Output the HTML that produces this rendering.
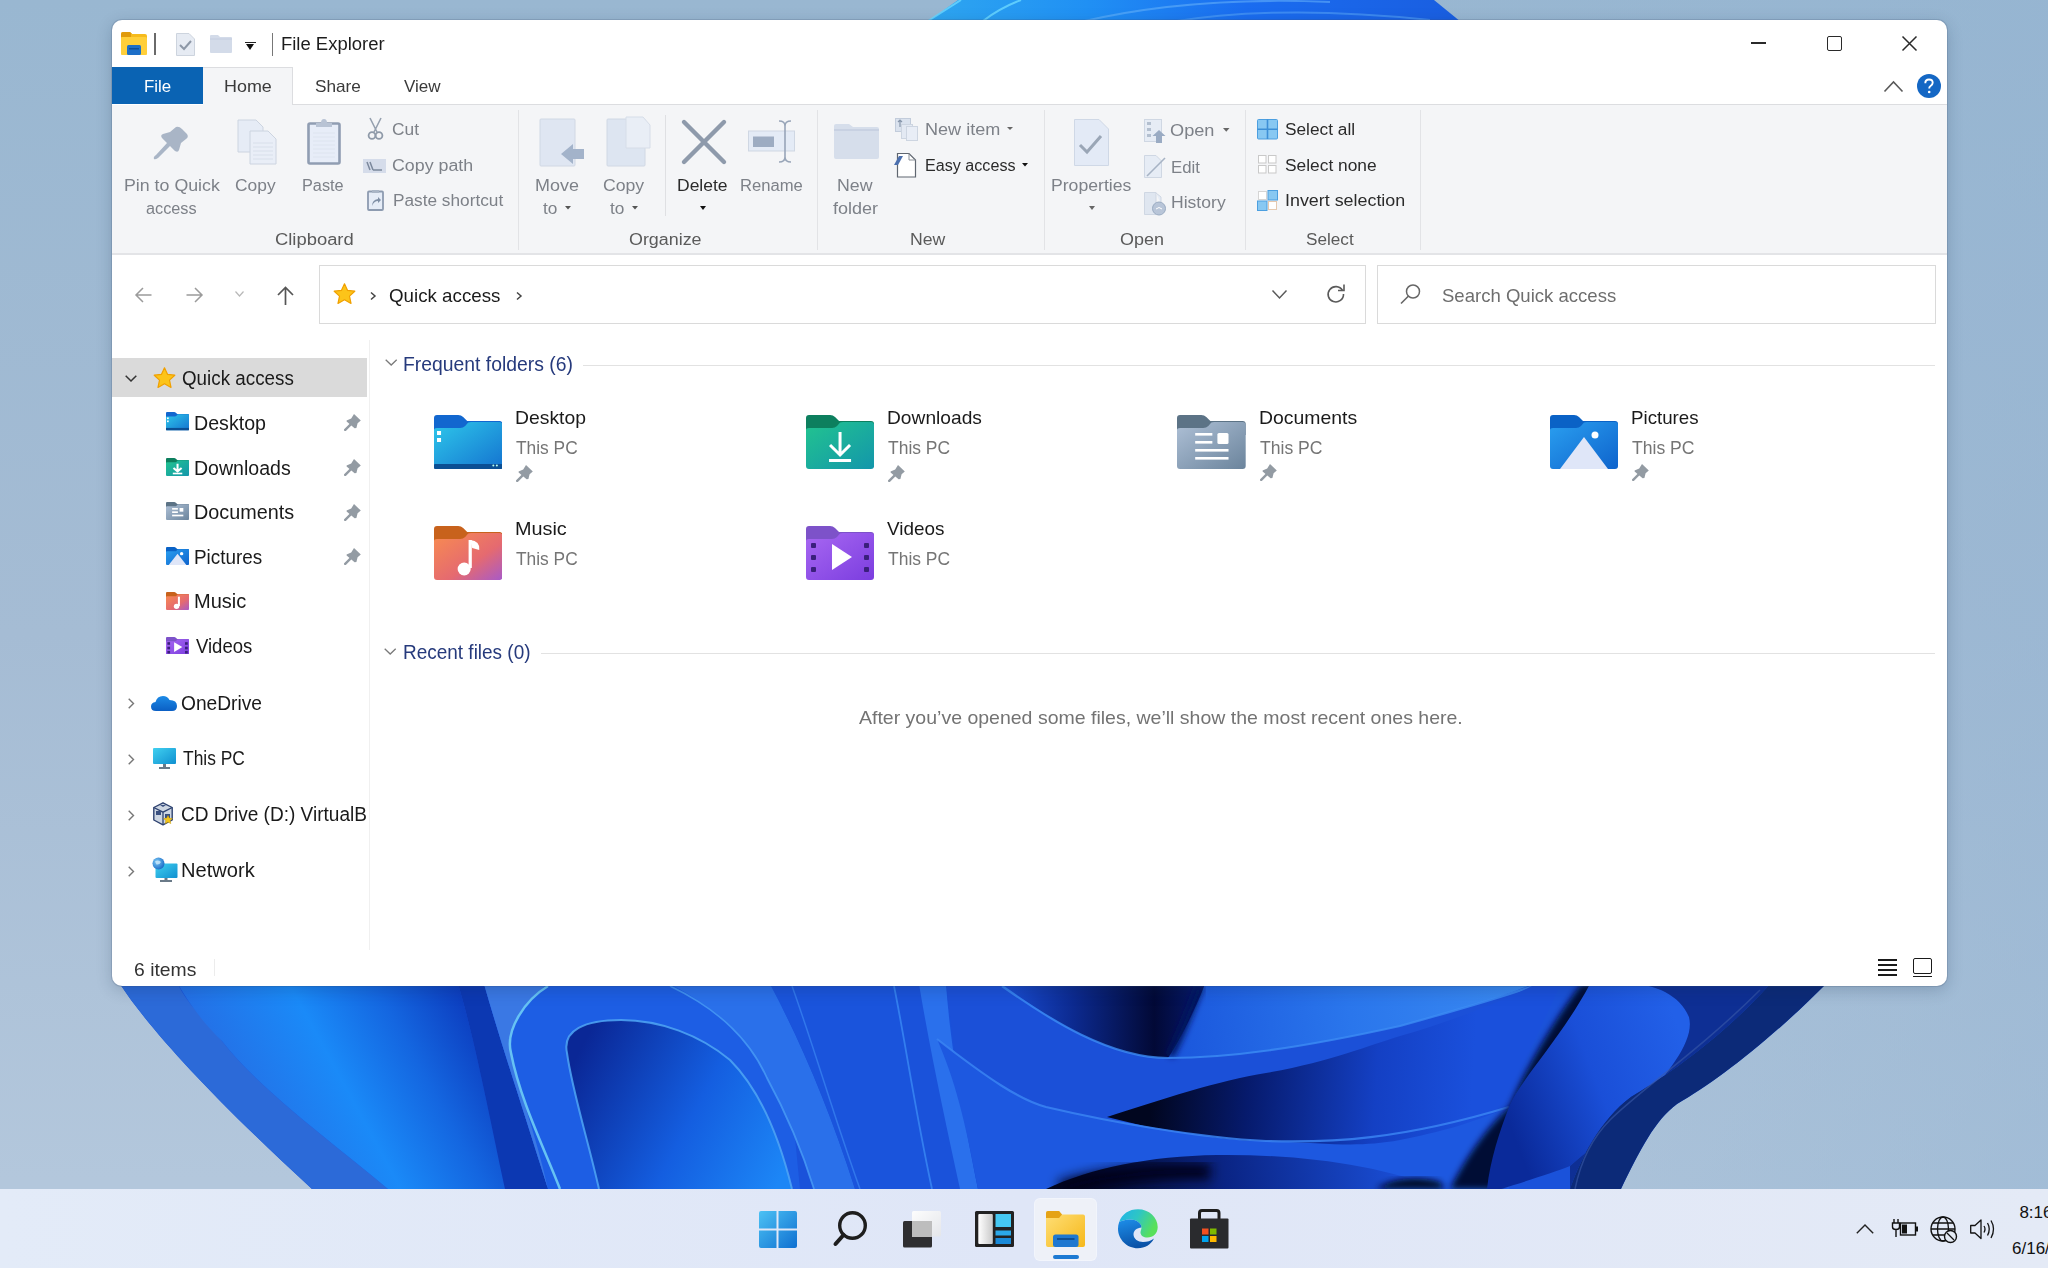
<!DOCTYPE html>
<html><head><meta charset="utf-8"><style>
*{margin:0;padding:0;box-sizing:border-box}
html,body{width:2048px;height:1268px;overflow:hidden}
body{position:relative;font-family:"Liberation Sans",sans-serif;background:#a5bdd5}
.a{position:absolute;display:block}
.t{position:absolute;white-space:nowrap;transform-origin:0 0}
.ln{position:absolute}
</style></head><body>
<svg class="a" style="left:0;top:0" width="2048" height="1268" viewBox="0 0 2048 1268">
<defs>
<linearGradient id="bg1" x1="0" y1="0" x2="0" y2="1"><stop offset="0" stop-color="#99b7d1"/><stop offset="0.5" stop-color="#a5bcd4"/><stop offset="0.93" stop-color="#b3c7dc"/></linearGradient>
<linearGradient id="bgr" x1="0" y1="0" x2="1" y2="0"><stop offset="0.55" stop-color="#96b6d2" stop-opacity="0"/><stop offset="1" stop-color="#94b4d2" stop-opacity=".55"/></linearGradient>
<linearGradient id="wtop" x1="0" y1="0" x2="1" y2="0"><stop offset="0" stop-color="#2ea6f0"/><stop offset="0.3" stop-color="#2090f4"/><stop offset="0.6" stop-color="#1a6cf0"/><stop offset="1" stop-color="#1a5ee0"/></linearGradient>
<linearGradient id="p2" gradientUnits="userSpaceOnUse" x1="260" y1="1140" x2="480" y2="1020"><stop offset="0" stop-color="#2470e6"/><stop offset="0.4" stop-color="#1a8af8"/><stop offset="0.7" stop-color="#1466e0"/><stop offset="1" stop-color="#0c3cbe"/></linearGradient>
<linearGradient id="fold" gradientUnits="userSpaceOnUse" x1="580" y1="1050" x2="790" y2="1160"><stop offset="0" stop-color="#0a2796"/><stop offset="0.55" stop-color="#145ee0"/><stop offset="1" stop-color="#1c86f6"/></linearGradient>
<linearGradient id="ptA" gradientUnits="userSpaceOnUse" x1="1170" y1="1050" x2="1500" y2="990"><stop offset="0" stop-color="#1a50d8"/><stop offset="1" stop-color="#3a7ef0"/></linearGradient>
<linearGradient id="ptD" gradientUnits="userSpaceOnUse" x1="1500" y1="1100" x2="1680" y2="1030"><stop offset="0" stop-color="#0a2a9a"/><stop offset="0.5" stop-color="#1a4fd8"/><stop offset="1" stop-color="#2260e8"/></linearGradient>
<linearGradient id="a1" gradientUnits="userSpaceOnUse" x1="1002" y1="0" x2="1205" y2="0"><stop offset="0" stop-color="#1a4ed6"/><stop offset="0.35" stop-color="#0c2a90"/><stop offset="0.75" stop-color="#020936"/><stop offset="1" stop-color="#061a70"/></linearGradient>
<linearGradient id="a2" gradientUnits="userSpaceOnUse" x1="1170" y1="1040" x2="1530" y2="990"><stop offset="0" stop-color="#1a56dc"/><stop offset="0.5" stop-color="#2a76ec"/><stop offset="1" stop-color="#3a8af2"/></linearGradient>
<linearGradient id="cr1" gradientUnits="userSpaceOnUse" x1="1150" y1="1105" x2="1470" y2="1125"><stop offset="0" stop-color="#01061f"/><stop offset="0.3" stop-color="#061a6c"/><stop offset="0.7" stop-color="#1440c4"/><stop offset="1" stop-color="#1a50dc"/></linearGradient>
<linearGradient id="cr2" gradientUnits="userSpaceOnUse" x1="1080" y1="1189" x2="1400" y2="1150"><stop offset="0" stop-color="#01061f"/><stop offset="0.45" stop-color="#0a2484"/><stop offset="1" stop-color="#1a4ed6"/></linearGradient>
<filter id="bl6" x="-20%" y="-50%" width="140%" height="200%"><feGaussianBlur stdDeviation="6"/></filter>
<filter id="bl3" x="-20%" y="-20%" width="140%" height="140%"><feGaussianBlur stdDeviation="3"/></filter>
<radialGradient id="crk" cx="0.5" cy="0.5" r="0.5"><stop offset="0" stop-color="#01041c"/><stop offset="0.7" stop-color="#061a6a"/><stop offset="1" stop-color="#0d36b0" stop-opacity="0.6"/></radialGradient>
</defs>
<rect width="2048" height="1268" fill="url(#bg1)"/>
<rect width="2048" height="1268" fill="url(#bgr)"/>
<path d="M927 22 L958 0 L1434 0 L1461 22 Z" fill="url(#wtop)"/>
<path d="M928 21 L961 0" stroke="#6cd8ff" stroke-width="2" fill="none" opacity=".8"/><path d="M983 21 Q1000 8 1021 0" stroke="#6cd8ff" stroke-width="2" fill="none" opacity=".8"/>
<path d="M1080 22 Q1190 -4 1330 2" stroke="#6ab4fa" stroke-width="2" fill="none" opacity=".55"/>
<path d="M1170 22 Q1280 4 1430 20" stroke="#5aa6f6" stroke-width="2" fill="none" opacity=".55"/>
<!-- bloom base -->
<path d="M120 984 C150 1030 215 1100 312 1189 L1621 1189 C1640 1150 1655 1120 1677 1104 C1716 1082 1770 1040 1826 984 Z" fill="#1a52da"/>
<!-- left outer band -->
<path d="M120 984 C150 1030 215 1100 312 1189 L388 1189 C330 1140 260 1090 222 1041 C200 1015 185 1000 178 984 Z" fill="#2c6ad8"/>
<path d="M178 984 C190 1005 205 1025 222 1041 C260 1090 330 1140 388 1189 L505 1189 C490 1120 475 1040 458 984 Z" fill="url(#p2)"/>
<path d="M458 984 C475 1040 490 1120 505 1189 L548 1189 C520 1100 500 1040 484 984 Z" fill="#0c38b2"/>
<!-- outer fold band -->
<path d="M484 984 C500 1040 520 1100 548 1189 L800 1189 L780 984 Z" fill="#1d5ee4"/>
<path d="M484 984 L548 984 C525 1000 505 1030 511 1053 C518 1090 535 1130 548 1189 C520 1100 500 1040 484 984 Z" fill="#3a78e4"/>
<path d="M548 986 C525 1000 505 1030 511 1053 C520 1100 545 1150 560 1189" stroke="#66c2f4" stroke-width="2.5" fill="none"/>

<!-- inner fold -->
<path d="M599 1189 C588 1140 572 1090 567 1053 C562 1030 585 1020 621 1020 C660 1020 700 1035 730 1060 C760 1090 780 1140 792 1189 Z" fill="url(#fold)"/>
<path d="M599 1189 C588 1140 572 1090 567 1053 C562 1030 585 1020 621 1020 C660 1020 700 1035 730 1060 C760 1090 780 1140 792 1189" stroke="#4fa6f4" stroke-width="2" fill="none" opacity=".85"/>
<!-- vertical bands -->
<path d="M670 984 C720 1010 750 1040 767 1078 C790 1120 805 1160 814 1189 L855 1189 C830 1110 800 1040 770 984 Z" fill="#2a70ea"/>
<path d="M670 986 C720 1010 750 1040 767 1078 C790 1120 805 1160 814 1189" stroke="#4a9ef6" stroke-width="1.8" fill="none" opacity=".8"/>
<path d="M770 984 C800 1040 830 1110 855 1189 L932 1189 C915 1110 905 1040 894 984 Z" fill="#1a54dc"/>
<path d="M792 986 C815 1050 835 1120 860 1189" stroke="#3a86f2" stroke-width="1.5" fill="none" opacity=".7"/>
<path d="M894 986 C905 1040 915 1110 932 1189" stroke="#3a8af4" stroke-width="1.8" fill="none" opacity=".8"/>
<path d="M919 984 C930 1050 945 1120 960 1189 L978 1189 C960 1100 950 1040 946 984 Z" fill="#2a70ec"/>
<!-- swirl -->
<path d="M946 984 C955 1060 965 1120 978 1189 L1460 1189 L1530 984 Z" fill="#1b50d8"/>
<path d="M937 1039 C990 1080 1020 1100 1046 1107 C1110 1122 1200 1138 1266 1141 C1330 1143 1400 1140 1509 1107 L1509 1189 L978 1189 C965 1120 955 1080 937 1039 Z" fill="#1d58e0"/>
<path d="M1002 984 C1050 1020 1110 1058 1168 1058 C1230 1058 1300 1048 1400 1026 C1450 1012 1500 998 1533 984 Z" fill="url(#a2)"/>
<path d="M1002 984 C1050 1020 1110 1058 1168 1058 C1180 1040 1195 1010 1205 984 Z" fill="url(#a1)"/>
<path d="M1200 986 C1190 1012 1180 1038 1170 1056" stroke="#041260" stroke-width="8" fill="none" filter="url(#bl3)"/>
<path d="M1002 986 C1050 1020 1110 1058 1168 1058 C1230 1058 1300 1048 1400 1026 C1450 1012 1500 998 1533 986" stroke="#3c8cf4" stroke-width="2.2" fill="none" opacity=".8"/>




<path d="M1107 1117 C1160 1100 1220 1080 1266 1073 C1330 1062 1370 1045 1400 1036 C1450 1022 1500 1002 1532 986 L1560 986 C1540 1030 1515 1080 1509 1107 C1470 1124 1440 1132 1400 1140 C1356 1148 1330 1143 1266 1141 C1230 1141 1200 1135 1144 1126 Z" fill="url(#cr1)"/>
<path d="M937 1039 C990 1080 1020 1100 1046 1107 C1110 1122 1200 1138 1266 1141 C1330 1143 1400 1140 1509 1107" stroke="#3a84f2" stroke-width="2.2" fill="none" opacity=".85"/>
<path d="M1046 1189 C1090 1168 1150 1156 1217 1155 C1300 1154 1380 1165 1440 1189 Z" fill="url(#cr2)"/>
<path d="M1060 1189 C1100 1176 1160 1170 1210 1172" stroke="#01051c" stroke-width="16" fill="none" filter="url(#bl6)"/>
<path d="M1376 1189 C1390 1178 1420 1175 1440 1182 L1445 1189 Z" fill="#02082a" filter="url(#bl3)"/>
<!-- right petals -->
<path d="M1509 1107 C1530 1060 1555 1020 1581 984 L1640 984 C1600 1040 1560 1080 1540 1110 C1520 1140 1505 1170 1501 1189 L1450 1189 C1470 1150 1490 1125 1509 1107 Z" fill="#030b36" filter="url(#bl3)"/>
<path d="M1590 984 C1560 1040 1520 1080 1509 1107 C1500 1130 1490 1160 1487 1189 L1501 1189 C1530 1180 1555 1172 1570 1166 C1600 1140 1630 1120 1643 1102 C1670 1070 1695 1040 1689 1017 C1680 995 1655 984 1631 984 Z" fill="url(#ptD)"/>
<path d="M1631 984 C1655 984 1680 995 1689 1017 C1695 1040 1670 1070 1643 1102 C1630 1120 1600 1140 1570 1166 L1570 1189 C1580 1160 1600 1120 1631 1097 C1660 1080 1720 1040 1770 984 Z" fill="#0e2f94"/>
<path d="M1770 984 C1720 1040 1660 1080 1631 1097 C1600 1120 1580 1160 1570 1189 L1621 1189 C1640 1150 1655 1120 1677 1104 C1716 1082 1770 1040 1826 984 Z" fill="#0c2a78"/>
<path d="M1760 990 C1700 1050 1640 1090 1610 1120 C1590 1140 1580 1165 1575 1189" stroke="#3a5aa8" stroke-width="1.5" fill="none" opacity=".6"/>
</svg>
<div class="a" style="left:112px;top:20px;width:1835px;height:966px;border-radius:10px;background:#fff;box-shadow:0 4px 16px rgba(20,40,70,.22),0 0 0 1px rgba(60,80,110,.18)"></div>
<!-- tabs row -->
<div class="a" style="left:112px;top:67px;width:91px;height:37px;background:#0a63b3"></div>
<div class="a" style="left:203px;top:67px;width:90px;height:38px;background:#f4f5f7;border-top:1px solid #dcdde0;border-right:1px solid #dcdde0"></div>
<div class="a" style="left:293px;top:104px;width:1654px;height:1px;background:#dcdde0"></div>
<!-- ribbon -->
<div class="a" style="left:112px;top:105px;width:1835px;height:149px;background:#f4f5f7"></div>
<div class="a" style="left:112px;top:253px;width:1835px;height:2px;background:#e3e4e7"></div>
<div class="a" style="left:518px;top:110px;width:1px;height:140px;background:#e2e3e6"></div>
<div class="a" style="left:817px;top:110px;width:1px;height:140px;background:#e2e3e6"></div>
<div class="a" style="left:1044px;top:110px;width:1px;height:140px;background:#e2e3e6"></div>
<div class="a" style="left:1245px;top:110px;width:1px;height:140px;background:#e2e3e6"></div>
<div class="a" style="left:1420px;top:110px;width:1px;height:140px;background:#e2e3e6"></div>
<div class="a" style="left:665px;top:115px;width:1px;height:101px;background:#dfe0e3"></div>
<svg class="a" style="left:121px;top:32px;overflow:visible" width="26" height="23" viewBox="0 0 26 23"><path d="M0 2Q0 0 2 0H9L11 2H24Q26 2 26 4V21Q26 23 24 23H2Q0 23 0 21Z" fill="#f6bb1d"/><path d="M0 2Q0 0 2 0H9L11 2H10V5H0Z" fill="#e09a0c"/><rect x="0" y="5" width="26" height="18" rx="1.5" fill="#ffcf3a"/><rect x="6" y="13" width="14" height="10" rx="1.5" fill="#1d6fc8"/><rect x="8" y="16" width="10" height="1.5" fill="#0d4f9a"/></svg><div class="a" style="left:154px;top:33px;width:2px;height:22px;background:#6a6a6a"></div><svg class="a" style="left:176px;top:33px;overflow:visible" width="19" height="23" viewBox="0 0 19 23"><path d="M0.5 0.5H13L18.5 6V22.5H0.5Z" fill="#e6ebf3" stroke="#cdd4de"/><path d="M4 12L8 16L15 8" stroke="#8d98a7" stroke-width="2" fill="none"/></svg><svg class="a" style="left:210px;top:35px;overflow:visible" width="22" height="18" viewBox="0 0 22 18"><path d="M0 1Q0 0 1 0H8L10 2H21Q22 2 22 3V17Q22 18 21 18H1Q0 18 0 17Z" fill="#d3dbe9"/><path d="M0 4H22" stroke="#c4cde0"/></svg><div class="a" style="left:244.5px;top:42px;width:11px;height:1.2px;background:#222"></div><svg class="a" style="left:246px;top:44px;overflow:visible" width="8" height="6" viewBox="0 0 8 6"><path d="M0 0H8L4 6Z" fill="#111"/></svg><div class="a" style="left:271.5px;top:33px;width:1.5px;height:23px;background:#777"></div><div class="a" style="left:1751px;top:42px;width:15px;height:1.5px;background:#2a2a2a"></div><div class="a" style="left:1827px;top:36px;width:14.5px;height:14.5px;border:1.5px solid #2a2a2a;border-radius:2px"></div><svg class="a" style="left:1902px;top:36px;overflow:visible" width="15" height="15" viewBox="0 0 15 15"><path d="M0.5 0.5L14.5 14.5M14.5 0.5L0.5 14.5" stroke="#2a2a2a" stroke-width="1.5"/></svg><svg class="a" style="left:1884px;top:81px;overflow:visible" width="19" height="11" viewBox="0 0 19 11"><path d="M0.5 10.5L9.5 1L18.5 10.5" stroke="#5a5a5a" stroke-width="1.6" fill="none"/></svg><svg class="a" style="left:1917px;top:73.5px;overflow:visible" width="24" height="24" viewBox="0 0 24 24"><circle cx="12" cy="12" r="12" fill="#1467c4"/><path d="M8.3 9.2Q8.3 5.5 12 5.5Q15.7 5.5 15.7 8.8Q15.7 10.8 13.3 12.2Q12.2 12.9 12.2 14.6" stroke="#fff" stroke-width="1.9" fill="none"/><circle cx="12.2" cy="18" r="1.3" fill="#fff"/></svg>
<svg class="a" style="left:154px;top:126px;overflow:visible" width="34" height="34" viewBox="0 0 34 34"><path d="M22 1Q25 0 28 3L33 8Q35 11 32 13L27 17L25 24Q24 27 21 25L16 20L4 32Q1 34 0 33Q-1 31 2 29L13 17L8 12Q6 9 9 8L16 6Z" fill="#a9b5c6"/></svg><svg class="a" style="left:236.5px;top:119px;overflow:visible" width="40" height="46" viewBox="0 0 40 46"><path d="M1 1H19L26 8V33H1Z" fill="#e6ecf6" stroke="#ccd4e0"/><path d="M13 12H31L39 20V45H13Z" fill="#e9eef7" stroke="#ccd4e0"/><path d="M16 24H36M16 28H36M16 32H36M16 36H36M16 40H36" stroke="#d8dfea"/></svg><svg class="a" style="left:307px;top:119px;overflow:visible" width="34" height="46" viewBox="0 0 34 46"><rect x="1.5" y="4.5" width="31" height="40" rx="1.5" fill="#e7edf8" stroke="#909db2" stroke-width="2.6"/><path d="M9 4H25V8H9Z" fill="#b8c3d4"/><path d="M14 4Q14 0 17 0Q20 0 20 4" fill="#b8c3d4"/><path d="M6 14H28M6 18H28M6 22H28M6 26H28M6 30H28M6 34H28M6 38H28" stroke="#dde4ef"/></svg><svg class="a" style="left:367px;top:118px;overflow:visible" width="17" height="23" viewBox="0 0 17 23"><path d="M3 0L10 14M14 0L7 14" stroke="#96a1b0" stroke-width="1.6" fill="none"/><circle cx="5" cy="17.5" r="3.4" fill="none" stroke="#8f9aa9" stroke-width="1.8"/><circle cx="12" cy="17.5" r="3.4" fill="none" stroke="#8f9aa9" stroke-width="1.8"/></svg><svg class="a" style="left:363px;top:158.5px;overflow:visible" width="23" height="14" viewBox="0 0 23 14"><rect width="23" height="14" fill="#d5dcea"/><path d="M4 3L7 11M7 3L10 11M10 11H19" stroke="#7b889c" stroke-width="1.5"/></svg><svg class="a" style="left:367px;top:189px;overflow:visible" width="17" height="22" viewBox="0 0 17 22"><rect x="1" y="2.5" width="15" height="18.5" rx="1" fill="#e5ecf7" stroke="#8d9bb0" stroke-width="1.8"/><rect x="5" y="1" width="7" height="3" fill="#a9b5c6"/><path d="M5 17Q5 11 11 10V8L14 11L11 14V12Q7 12 5 17Z" fill="#7f8fa6"/></svg><svg class="a" style="left:540px;top:117px;overflow:visible" width="45" height="50" viewBox="0 0 45 50"><rect x="0" y="2" width="35" height="47" rx="1" fill="#dfe6f2" stroke="#d0d8e4"/><path d="M21 37L33 27V32H44V42H33V47Z" fill="#a3b3ca"/></svg><svg class="a" style="left:607px;top:117px;overflow:visible" width="44" height="50" viewBox="0 0 44 50"><rect x="0" y="2" width="38" height="47" rx="1" fill="#dde5f1" stroke="#d0d8e4"/><path d="M19 0H36L43 8V31H19Z" fill="#e9eef6" stroke="#d6dde8"/></svg><svg class="a" style="left:681px;top:119px;overflow:visible" width="46" height="46" viewBox="0 0 46 46"><path d="M3 3L43 43M43 3L3 43" stroke="#8e9aab" stroke-width="4.4" stroke-linecap="round"/></svg><svg class="a" style="left:748px;top:120px;overflow:visible" width="48" height="44" viewBox="0 0 48 44"><rect x="0.5" y="11" width="46" height="20" fill="#e4ebf6" stroke="#cfd7e3"/><rect x="5" y="16.5" width="21" height="10.5" fill="#9dacc2"/><path d="M31 1Q37 1 37 6V37Q37 42 31 42M43 1Q37 1 37 6M37 37Q37 42 43 42" stroke="#98a5b8" stroke-width="1.6" fill="none"/></svg><svg class="a" style="left:832.7px;top:123px;overflow:visible" width="46" height="36" viewBox="0 0 46 36"><path d="M1 3Q1 1 3 1H16L20 4H44Q46 4 46 6V34Q46 36 44 36H3Q1 36 1 34Z" fill="#d6deeb"/><path d="M1 7H46" stroke="#c8d1e2" stroke-width="2"/></svg><svg class="a" style="left:895px;top:117.5px;overflow:visible" width="24" height="23" viewBox="0 0 24 23"><rect x="0.5" y="0.5" width="15" height="13" fill="#dae2ee" stroke="#c2ccdb"/><path d="M5 2V9M3 4L5 2L7 4" stroke="#8796ab" stroke-width="1.2" fill="none"/><rect x="6.5" y="6.5" width="11" height="14" fill="#e3e9f3" stroke="#cdd5e1"/><rect x="11.5" y="8.5" width="11" height="14" fill="#e8edf6" stroke="#cdd5e1"/></svg><svg class="a" style="left:894px;top:152.5px;overflow:visible" width="23" height="25" viewBox="0 0 23 25"><path d="M3.5 0.5H15L21.5 7V24H3.5Z" fill="#fff" stroke="#5f6670" stroke-width="1.2"/><path d="M15 0.5V7H21.5" fill="none" stroke="#8a9098"/><path d="M0 12L5 3H9L4 12Z" fill="#4b6fae"/></svg><svg class="a" style="left:1074px;top:119px;overflow:visible" width="35" height="47" viewBox="0 0 35 47"><path d="M0.5 0.5H25L34.5 10V46.5H0.5Z" fill="#e3eaf6" stroke="#cfd8e6"/><path d="M6 26L13 33L27 17" stroke="#9aa6b6" stroke-width="3" fill="none"/></svg><svg class="a" style="left:1144px;top:118.8px;overflow:visible" width="22" height="25" viewBox="0 0 22 25"><rect x="0.5" y="0.5" width="17" height="22" fill="#e6ecf5" stroke="#cfd7e3"/><rect x="3" y="3" width="4" height="3" fill="#b3bfcf"/><rect x="3" y="9" width="4" height="3" fill="#b3bfcf"/><rect x="3" y="15" width="4" height="3" fill="#b3bfcf"/><path d="M15 11L21.5 17H18V24H12V17H8.5Z" fill="#9aabc3"/></svg><svg class="a" style="left:1143.5px;top:155px;overflow:visible" width="22" height="23" viewBox="0 0 22 23"><path d="M0.5 0.5H12L17.5 6V22.5H0.5Z" fill="#e6ecf5" stroke="#cfd7e3"/><path d="M3 21L21 3" stroke="#a7b3c4" stroke-width="1.6"/></svg><svg class="a" style="left:1143.5px;top:191.5px;overflow:visible" width="23" height="24" viewBox="0 0 23 24"><path d="M0.5 0.5H12V22.5H0.5Z" fill="#dfe6f0" stroke="#cfd7e3"/><path d="M12 1L17 5V12" fill="#e6ecf5" stroke="#cfd7e3"/><circle cx="15" cy="16.5" r="6.5" fill="#b8c5d8" stroke="#9aabc2"/><path d="M12 17Q15 14 18 17" stroke="#fff" fill="none"/></svg><svg class="a" style="left:1257px;top:119.4px;overflow:visible" width="21" height="20.5" viewBox="0 0 21 20.5"><rect x="0.5" y="0.5" width="20" height="19.5" rx="1" fill="#88c8f2" stroke="#4c9fe0"/><path d="M10.5 0.5V20M0.5 10.3H20.5" stroke="#3d8fd6" stroke-width="1.6"/></svg><svg class="a" style="left:1258px;top:155px;overflow:visible" width="19" height="19" viewBox="0 0 19 19"><rect x="0.5" y="0.5" width="7.5" height="7.5" fill="#fff" stroke="#c9c9c9"/><rect x="10.5" y="0.5" width="7.5" height="7.5" fill="#fff" stroke="#c9c9c9"/><rect x="0.5" y="10.5" width="7.5" height="7.5" fill="#fff" stroke="#c9c9c9"/><rect x="10.5" y="10.5" width="7.5" height="7.5" fill="#fff" stroke="#c9c9c9"/></svg><svg class="a" style="left:1257px;top:189.7px;overflow:visible" width="21" height="21" viewBox="0 0 21 21"><rect x="1.5" y="1.5" width="8" height="8" fill="#fff" stroke="#d5d5d5"/><rect x="11" y="0.5" width="9.5" height="9.5" fill="#88c8f2" stroke="#4c9fe0"/><rect x="0.5" y="11" width="9.5" height="9.5" fill="#88c8f2" stroke="#4c9fe0"/><rect x="11.5" y="11.5" width="8" height="8" fill="#fff" stroke="#e5c9b0"/></svg><svg class="a" style="left:565px;top:206px;overflow:visible" width="6" height="3.5" viewBox="0 0 6 3.5"><path d="M0 0H6L3.0 3.5Z" fill="#555"/></svg><svg class="a" style="left:631.5px;top:206px;overflow:visible" width="6.0" height="3.5" viewBox="0 0 6.0 3.5"><path d="M0 0H6.0L3.0 3.5Z" fill="#555"/></svg><svg class="a" style="left:700px;top:205.5px;overflow:visible" width="6" height="4.0" viewBox="0 0 6 4.0"><path d="M0 0H6L3.0 4.0Z" fill="#111"/></svg><svg class="a" style="left:1006.5px;top:127px;overflow:visible" width="6.0" height="3" viewBox="0 0 6.0 3"><path d="M0 0H6.0L3.0 3Z" fill="#666"/></svg><svg class="a" style="left:1021.5px;top:162.5px;overflow:visible" width="6.0" height="3.5" viewBox="0 0 6.0 3.5"><path d="M0 0H6.0L3.0 3.5Z" fill="#111"/></svg><svg class="a" style="left:1089px;top:205.5px;overflow:visible" width="6" height="4.0" viewBox="0 0 6 4.0"><path d="M0 0H6L3.0 4.0Z" fill="#666"/></svg><svg class="a" style="left:1223px;top:128.3px;overflow:visible" width="6.5" height="3.6999999999999886" viewBox="0 0 6.5 3.6999999999999886"><path d="M0 0H6.5L3.25 3.6999999999999886Z" fill="#666"/></svg>
<!-- address row -->
<div class="a" style="left:318.5px;top:264.5px;width:1047px;height:59px;border:1px solid #dadada;background:#fff"></div>
<div class="a" style="left:1377px;top:264.5px;width:559px;height:59px;border:1px solid #dadada;background:#fff"></div>
<svg class="a" style="left:135px;top:287px;overflow:visible" width="17" height="16" viewBox="0 0 17 16"><path d="M16.5 8H1M8 1L1 8L8 15" stroke="#9b9b9b" stroke-width="1.5" fill="none"/></svg><svg class="a" style="left:186px;top:287px;overflow:visible" width="17" height="16" viewBox="0 0 17 16"><path d="M0.5 8H16M9 1L16 8L9 15" stroke="#9b9b9b" stroke-width="1.5" fill="none"/></svg><svg class="a" style="left:234.5px;top:290.5px;overflow:visible" width="9" height="6" viewBox="0 0 9 6"><path d="M0.5 0.5L4.5 5L8.5 0.5" stroke="#b8b8b8" stroke-width="1.2" fill="none"/></svg><svg class="a" style="left:277px;top:286px;overflow:visible" width="17" height="19" viewBox="0 0 17 19"><path d="M8.5 19V1.5M1 9L8.5 1.5L16 9" stroke="#555" stroke-width="1.7" fill="none"/></svg><svg class="a" style="left:333px;top:282.5px;overflow:visible" width="23" height="22" viewBox="0 0 23 22"><path d="M11.5 0.8L14.6 7.4L21.8 8.2L16.5 13.1L18 20.4L11.5 16.7L5 20.4L6.5 13.1L1.2 8.2L8.4 7.4Z" fill="#fcc419" stroke="#f0a000" stroke-width="1.2" stroke-linejoin="round"/></svg><svg class="a" style="left:370px;top:291.5px;overflow:visible" width="6" height="8" viewBox="0 0 6 8"><path d="M1 0.5L5 4L1 7.5" stroke="#444" stroke-width="1.5" fill="none"/></svg><svg class="a" style="left:515.5px;top:291.5px;overflow:visible" width="6" height="8" viewBox="0 0 6 8"><path d="M1 0.5L5 4L1 7.5" stroke="#444" stroke-width="1.5" fill="none"/></svg><svg class="a" style="left:1271.5px;top:289.5px;overflow:visible" width="15" height="9" viewBox="0 0 15 9"><path d="M0.5 0.5L7.5 8L14.5 0.5" stroke="#5a5a5a" stroke-width="1.5" fill="none"/></svg><svg class="a" style="left:1327px;top:284px;overflow:visible" width="18" height="18" viewBox="0 0 18 18"><path d="M15.5 6.5A7.7 7.7 0 1 0 16.5 10" stroke="#5a5a5a" stroke-width="1.6" fill="none"/><path d="M17 0.5V6.5H11" stroke="#5a5a5a" stroke-width="1.6" fill="none"/></svg><svg class="a" style="left:1400px;top:284px;overflow:visible" width="21" height="20" viewBox="0 0 21 20"><circle cx="13" cy="7.5" r="6.5" stroke="#666" stroke-width="1.5" fill="none"/><path d="M8.5 12L1 19.5" stroke="#666" stroke-width="1.6"/></svg>
<!-- nav -->
<div class="a" style="left:112px;top:358px;width:254.5px;height:39px;background:#dadada"></div>
<div class="a" style="left:369px;top:340px;width:1px;height:610px;background:#f0f0f0"></div>
<svg class="a" style="left:124.5px;top:374.5px;overflow:visible" width="12" height="7" viewBox="0 0 12 7"><path d="M0.7 0.7L6 6L11.3 0.7" stroke="#333" stroke-width="1.5" fill="none"/></svg><svg class="a" style="left:153px;top:366.5px;overflow:visible" width="23" height="22" viewBox="0 0 23 22"><path d="M11.5 0.8L14.6 7.4L21.8 8.2L16.5 13.1L18 20.4L11.5 16.7L5 20.4L6.5 13.1L1.2 8.2L8.4 7.4Z" fill="#fcc419" stroke="#f0a000" stroke-width="1.2" stroke-linejoin="round"/></svg><svg class="a" style="left:344.3px;top:414.4px" width="17" height="17" viewBox="0 0 17 17"><path d="M10 0L16.8 6.6L13.6 9.2L12.4 14L10.6 14.2L2.6 7.6L2.6 6.6L7.2 4.4Z" fill="#939ba3"/><path d="M6.2 10.8L1.2 15.8" stroke="#939ba3" stroke-width="2.4" stroke-linecap="round"/></svg><svg class="a" style="left:344.3px;top:459px" width="17" height="17" viewBox="0 0 17 17"><path d="M10 0L16.8 6.6L13.6 9.2L12.4 14L10.6 14.2L2.6 7.6L2.6 6.6L7.2 4.4Z" fill="#939ba3"/><path d="M6.2 10.8L1.2 15.8" stroke="#939ba3" stroke-width="2.4" stroke-linecap="round"/></svg><svg class="a" style="left:344.3px;top:503.5px" width="17" height="17" viewBox="0 0 17 17"><path d="M10 0L16.8 6.6L13.6 9.2L12.4 14L10.6 14.2L2.6 7.6L2.6 6.6L7.2 4.4Z" fill="#939ba3"/><path d="M6.2 10.8L1.2 15.8" stroke="#939ba3" stroke-width="2.4" stroke-linecap="round"/></svg><svg class="a" style="left:344.3px;top:548px" width="17" height="17" viewBox="0 0 17 17"><path d="M10 0L16.8 6.6L13.6 9.2L12.4 14L10.6 14.2L2.6 7.6L2.6 6.6L7.2 4.4Z" fill="#939ba3"/><path d="M6.2 10.8L1.2 15.8" stroke="#939ba3" stroke-width="2.4" stroke-linecap="round"/></svg><svg class="a" style="left:127.5px;top:698px;overflow:visible" width="7" height="11" viewBox="0 0 7 11"><path d="M0.7 0.7L5.5 5.5L0.7 10.3" stroke="#777" stroke-width="1.4" fill="none"/></svg><svg class="a" style="left:127.5px;top:754px;overflow:visible" width="7" height="11" viewBox="0 0 7 11"><path d="M0.7 0.7L5.5 5.5L0.7 10.3" stroke="#777" stroke-width="1.4" fill="none"/></svg><svg class="a" style="left:127.5px;top:809.5px;overflow:visible" width="7" height="11" viewBox="0 0 7 11"><path d="M0.7 0.7L5.5 5.5L0.7 10.3" stroke="#777" stroke-width="1.4" fill="none"/></svg><svg class="a" style="left:127.5px;top:866px;overflow:visible" width="7" height="11" viewBox="0 0 7 11"><path d="M0.7 0.7L5.5 5.5L0.7 10.3" stroke="#777" stroke-width="1.4" fill="none"/></svg><svg class="a" style="left:151px;top:693.5px;overflow:visible" width="26" height="17" viewBox="0 0 26 17"><defs><linearGradient id="od" x1="0" y1="0" x2="0" y2="1"><stop offset="0" stop-color="#1c8ae6"/><stop offset="1" stop-color="#0b5fc4"/></linearGradient></defs><path d="M5 17Q0 17 0 12.5Q0 8.5 4.5 8Q6 2 12 2Q16.5 2 18.5 6Q26 6 26 12Q26 17 21 17Z" fill="url(#od)"/></svg><svg class="a" style="left:152.8px;top:747.5px;overflow:visible" width="23" height="21" viewBox="0 0 23 21"><defs><linearGradient id="pc" x1="0" y1="0" x2="1" y2="1"><stop offset="0" stop-color="#40d0f0"/><stop offset="1" stop-color="#1090d0"/></linearGradient></defs><rect x="0" y="0" width="23" height="16" rx="1" fill="url(#pc)"/><rect x="10" y="16" width="3" height="3" fill="#6a7a88"/><rect x="6" y="19" width="11" height="2" fill="#6a7a88"/></svg><svg class="a" style="left:152.8px;top:801.5px;overflow:visible" width="20" height="23.5" viewBox="0 0 20 23.5"><path d="M10 0.8L19.2 5.5V18L10 22.8L0.8 18V5.5Z" fill="#cdd6e2" stroke="#2e4270" stroke-width="1.4" stroke-linejoin="round"/><path d="M0.8 5.5L10 10.2L19.2 5.5M10 10.2V22.8" stroke="#2e4270" stroke-width="1.3" fill="none"/><rect x="3" y="9" width="5" height="4" fill="#3a5080"/><rect x="12" y="12" width="5" height="4" fill="#3a5080"/><path d="M7 3L13 3L10 5Z" fill="#3a5080"/><path d="M15 13.5L16.4 16.3L19.4 16.6L17.1 18.6L17.8 21.6L15 20L12.2 21.6L12.9 18.6L10.6 16.6L13.6 16.3Z" fill="#f5c518" stroke="#c99a00" stroke-width=".5"/></svg><svg class="a" style="left:151.9px;top:857px;overflow:visible" width="25.5" height="25" viewBox="0 0 25.5 25"><defs><linearGradient id="nw" x1="0" y1="0" x2="1" y2="1"><stop offset="0" stop-color="#40d0f0"/><stop offset="1" stop-color="#1090d0"/></linearGradient><radialGradient id="gl" cx=".35" cy=".35" r=".7"><stop offset="0" stop-color="#7cc8f4"/><stop offset="1" stop-color="#1a6cc8"/></radialGradient></defs><rect x="3.5" y="6.5" width="22" height="14.5" rx="1" fill="url(#nw)"/><rect x="12.5" y="21" width="3" height="2.5" fill="#6a7a88"/><rect x="8" y="23" width="12" height="2" fill="#6a7a88"/><circle cx="6.5" cy="6.5" r="6" fill="url(#gl)"/><path d="M3 4.5Q6 2.5 9 5Q7.5 8 4.5 7.5Z" fill="#cfeafb" opacity=".8"/></svg>
<!-- content -->
<div class="a" style="left:583px;top:364.5px;width:1352px;height:1px;background:#e2e2e2"></div>
<div class="a" style="left:541px;top:652.5px;width:1394px;height:1px;background:#e2e2e2"></div>
<svg class="a" style="left:433.6px;top:415px" width="68.4" height="54" viewBox="0 0 68 54" preserveAspectRatio="none">
<defs><linearGradient id="gd" x1="0" y1="0" x2="1" y2="1"><stop offset="0" stop-color="#2ec7ea"/><stop offset="1" stop-color="#1473d0"/></linearGradient></defs>
<path d="M3 0H24Q27 0 29 2L33 6H65Q68 6 68 9V20H0V3Q0 0 3 0Z" fill="#1267cf"/>
<path d="M0 15Q0 13 3 13H26Q29 13 31 11L34 7.5Q35 7 37 7H65Q68 7 68 10V51Q68 54 65 54H3Q0 54 0 51Z" fill="url(#gd)"/>
<rect x="0" y="49" width="68" height="5" rx="1" fill="#0b4f94"/><rect x="3" y="16" width="4" height="4" fill="#fff"/><rect x="3" y="23" width="4" height="4" fill="#fff"/><circle cx="59" cy="50.5" r="1" fill="#bfe" /><circle cx="62.5" cy="50.5" r="1" fill="#bfe"/></svg>
<svg class="a" style="left:805.9px;top:415px" width="68.1" height="54" viewBox="0 0 68 54" preserveAspectRatio="none">
<defs><linearGradient id="gdl" x1="0" y1="0" x2="1" y2="1"><stop offset="0" stop-color="#22c48f"/><stop offset="1" stop-color="#1396ab"/></linearGradient></defs>
<path d="M3 0H24Q27 0 29 2L33 6H65Q68 6 68 9V20H0V3Q0 0 3 0Z" fill="#0d7f5e"/>
<path d="M0 15Q0 13 3 13H26Q29 13 31 11L34 7.5Q35 7 37 7H65Q68 7 68 10V51Q68 54 65 54H3Q0 54 0 51Z" fill="url(#gdl)"/>
<path d="M34 17V40M24 30L34 40L44 30" stroke="#fff" stroke-width="3" fill="none"/><rect x="23" y="44" width="22" height="3" fill="#fff"/></svg>
<svg class="a" style="left:1177.4px;top:415px" width="68.7" height="54" viewBox="0 0 68 54" preserveAspectRatio="none">
<defs><linearGradient id="gdc" x1="0" y1="0" x2="1" y2="1"><stop offset="0" stop-color="#aec0d6"/><stop offset="1" stop-color="#6b849c"/></linearGradient></defs>
<path d="M3 0H24Q27 0 29 2L33 6H65Q68 6 68 9V20H0V3Q0 0 3 0Z" fill="#5c7386"/>
<path d="M0 15Q0 13 3 13H26Q29 13 31 11L34 7.5Q35 7 37 7H65Q68 7 68 10V51Q68 54 65 54H3Q0 54 0 51Z" fill="url(#gdc)"/>
<rect x="18" y="18" width="17" height="2.6" fill="#fff"/><rect x="18" y="26" width="17" height="2.6" fill="#fff"/><rect x="18" y="34" width="33" height="2.6" fill="#fff"/><rect x="18" y="42" width="33" height="2.6" fill="#fff"/><rect x="40" y="18" width="11" height="11" rx="1.5" fill="#fff"/></svg>
<svg class="a" style="left:1549.5px;top:415px" width="68" height="54" viewBox="0 0 68 54" preserveAspectRatio="none">
<defs><linearGradient id="gpi" x1="0" y1="0" x2="1" y2="1"><stop offset="0" stop-color="#2a9ff0"/><stop offset="1" stop-color="#0e63cc"/></linearGradient></defs>
<path d="M3 0H24Q27 0 29 2L33 6H65Q68 6 68 9V20H0V3Q0 0 3 0Z" fill="#0a62c6"/>
<path d="M0 15Q0 13 3 13H26Q29 13 31 11L34 7.5Q35 7 37 7H65Q68 7 68 10V51Q68 54 65 54H3Q0 54 0 51Z" fill="url(#gpi)"/>
<path d="M10 54L34 22L58 54Z" fill="#dfe6f8"/><circle cx="45" cy="20" r="3.5" fill="#fff"/></svg>
<svg class="a" style="left:433.6px;top:525.5px" width="68.4" height="54" viewBox="0 0 68 54" preserveAspectRatio="none">
<defs><linearGradient id="gmu" x1="0" y1="0" x2="1" y2="1"><stop offset="0" stop-color="#f88c50"/><stop offset=".6" stop-color="#e56a70"/><stop offset="1" stop-color="#a85ac8"/></linearGradient></defs>
<path d="M3 0H24Q27 0 29 2L33 6H65Q68 6 68 9V20H0V3Q0 0 3 0Z" fill="#c8621c"/>
<path d="M0 15Q0 13 3 13H26Q29 13 31 11L34 7.5Q35 7 37 7H65Q68 7 68 10V51Q68 54 65 54H3Q0 54 0 51Z" fill="url(#gmu)"/>
<path d="M36 14V42" stroke="#fff" stroke-width="3.2"/><path d="M36 14Q46 15 45 24L38 22Z" fill="#fff"/><circle cx="30" cy="43" r="6.5" fill="#fff"/></svg>
<svg class="a" style="left:805.7px;top:525.5px" width="68" height="54" viewBox="0 0 68 54" preserveAspectRatio="none">
<defs><linearGradient id="gvi" x1="0" y1="0" x2="1" y2="1"><stop offset="0" stop-color="#a868f2"/><stop offset="1" stop-color="#7b3ddf"/></linearGradient></defs>
<path d="M3 0H24Q27 0 29 2L33 6H65Q68 6 68 9V20H0V3Q0 0 3 0Z" fill="#7d52c9"/>
<path d="M0 15Q0 13 3 13H26Q29 13 31 11L34 7.5Q35 7 37 7H65Q68 7 68 10V51Q68 54 65 54H3Q0 54 0 51Z" fill="url(#gvi)"/>
<rect x="5" y="17" width="5" height="5" rx="1" fill="#3a1f7c"/><rect x="5" y="29" width="5" height="5" rx="1" fill="#3a1f7c"/><rect x="5" y="41" width="5" height="5" rx="1" fill="#3a1f7c"/><rect x="58" y="17" width="5" height="5" rx="1" fill="#3a1f7c"/><rect x="58" y="29" width="5" height="5" rx="1" fill="#3a1f7c"/><rect x="58" y="41" width="5" height="5" rx="1" fill="#3a1f7c"/><path d="M26 18L46 31L26 44Z" fill="#fff"/></svg>
<svg class="a" style="left:165.9px;top:412.4px" width="23.1" height="18.3" viewBox="0 0 68 54" preserveAspectRatio="none">
<defs><linearGradient id="ngd" x1="0" y1="0" x2="1" y2="1"><stop offset="0" stop-color="#2ec7ea"/><stop offset="1" stop-color="#1473d0"/></linearGradient></defs>
<path d="M3 0H24Q27 0 29 2L33 6H65Q68 6 68 9V20H0V3Q0 0 3 0Z" fill="#1267cf"/>
<path d="M0 15Q0 13 3 13H26Q29 13 31 11L34 7.5Q35 7 37 7H65Q68 7 68 10V51Q68 54 65 54H3Q0 54 0 51Z" fill="url(#ngd)"/>
<rect x="0" y="47" width="68" height="7" fill="#0b4f94"/><rect x="3" y="16" width="5" height="5" fill="#fff"/><rect x="3" y="25" width="5" height="5" fill="#fff"/></svg>
<svg class="a" style="left:165.9px;top:457.5px" width="23.1" height="18" viewBox="0 0 68 54" preserveAspectRatio="none">
<defs><linearGradient id="ngdl" x1="0" y1="0" x2="1" y2="1"><stop offset="0" stop-color="#22c48f"/><stop offset="1" stop-color="#1396ab"/></linearGradient></defs>
<path d="M3 0H24Q27 0 29 2L33 6H65Q68 6 68 9V20H0V3Q0 0 3 0Z" fill="#0d7f5e"/>
<path d="M0 15Q0 13 3 13H26Q29 13 31 11L34 7.5Q35 7 37 7H65Q68 7 68 10V51Q68 54 65 54H3Q0 54 0 51Z" fill="url(#ngdl)"/>
<path d="M34 17V40M22 30L34 40L46 30" stroke="#fff" stroke-width="6" fill="none"/><rect x="20" y="44" width="28" height="5" fill="#fff"/></svg>
<svg class="a" style="left:165.9px;top:502px" width="23.1" height="18" viewBox="0 0 68 54" preserveAspectRatio="none">
<defs><linearGradient id="ngdc" x1="0" y1="0" x2="1" y2="1"><stop offset="0" stop-color="#aec0d6"/><stop offset="1" stop-color="#6b849c"/></linearGradient></defs>
<path d="M3 0H24Q27 0 29 2L33 6H65Q68 6 68 9V20H0V3Q0 0 3 0Z" fill="#5c7386"/>
<path d="M0 15Q0 13 3 13H26Q29 13 31 11L34 7.5Q35 7 37 7H65Q68 7 68 10V51Q68 54 65 54H3Q0 54 0 51Z" fill="url(#ngdc)"/>
<rect x="18" y="18" width="17" height="5" fill="#fff"/><rect x="18" y="28" width="17" height="5" fill="#fff"/><rect x="18" y="38" width="33" height="5" fill="#fff"/><rect x="40" y="18" width="11" height="11" fill="#fff"/></svg>
<svg class="a" style="left:165.9px;top:547px" width="23.1" height="18" viewBox="0 0 68 54" preserveAspectRatio="none">
<defs><linearGradient id="ngpi" x1="0" y1="0" x2="1" y2="1"><stop offset="0" stop-color="#2a9ff0"/><stop offset="1" stop-color="#0e63cc"/></linearGradient></defs>
<path d="M3 0H24Q27 0 29 2L33 6H65Q68 6 68 9V20H0V3Q0 0 3 0Z" fill="#0a62c6"/>
<path d="M0 15Q0 13 3 13H26Q29 13 31 11L34 7.5Q35 7 37 7H65Q68 7 68 10V51Q68 54 65 54H3Q0 54 0 51Z" fill="url(#ngpi)"/>
<path d="M8 54L34 20L60 54Z" fill="#dfe6f8"/><circle cx="46" cy="20" r="5" fill="#fff"/></svg>
<svg class="a" style="left:165.9px;top:592px" width="23.1" height="18" viewBox="0 0 68 54" preserveAspectRatio="none">
<defs><linearGradient id="ngmu" x1="0" y1="0" x2="1" y2="1"><stop offset="0" stop-color="#f88c50"/><stop offset=".6" stop-color="#e56a70"/><stop offset="1" stop-color="#a85ac8"/></linearGradient></defs>
<path d="M3 0H24Q27 0 29 2L33 6H65Q68 6 68 9V20H0V3Q0 0 3 0Z" fill="#c8621c"/>
<path d="M0 15Q0 13 3 13H26Q29 13 31 11L34 7.5Q35 7 37 7H65Q68 7 68 10V51Q68 54 65 54H3Q0 54 0 51Z" fill="url(#ngmu)"/>
<path d="M38 14V42" stroke="#fff" stroke-width="6"/><circle cx="31" cy="43" r="8" fill="#fff"/></svg>
<svg class="a" style="left:165.9px;top:636.8px" width="23.1" height="17.5" viewBox="0 0 68 54" preserveAspectRatio="none">
<defs><linearGradient id="ngvi" x1="0" y1="0" x2="1" y2="1"><stop offset="0" stop-color="#a868f2"/><stop offset="1" stop-color="#7b3ddf"/></linearGradient></defs>
<path d="M3 0H24Q27 0 29 2L33 6H65Q68 6 68 9V20H0V3Q0 0 3 0Z" fill="#7d52c9"/>
<path d="M0 15Q0 13 3 13H26Q29 13 31 11L34 7.5Q35 7 37 7H65Q68 7 68 10V51Q68 54 65 54H3Q0 54 0 51Z" fill="url(#ngvi)"/>
<rect x="4" y="16" width="8" height="8" fill="#3a1f7c"/><rect x="4" y="30" width="8" height="8" fill="#3a1f7c"/><rect x="4" y="43" width="8" height="8" fill="#3a1f7c"/><rect x="56" y="16" width="8" height="8" fill="#3a1f7c"/><rect x="56" y="30" width="8" height="8" fill="#3a1f7c"/><rect x="56" y="43" width="8" height="8" fill="#3a1f7c"/><path d="M24 16L48 31L24 46Z" fill="#fff"/></svg>
<svg class="a" style="left:384.5px;top:359px;overflow:visible" width="12.5" height="7" viewBox="0 0 12.5 7"><path d="M0.7 0.7L6.2 6L11.7 0.7" stroke="#7a7a7a" stroke-width="1.3" fill="none"/></svg><svg class="a" style="left:384px;top:647.5px;overflow:visible" width="12.5" height="7" viewBox="0 0 12.5 7"><path d="M0.7 0.7L6.2 6L11.7 0.7" stroke="#7a7a7a" stroke-width="1.3" fill="none"/></svg><svg class="a" style="left:515.8px;top:464.5px" width="17" height="17" viewBox="0 0 17 17"><path d="M10 0L16.8 6.6L13.6 9.2L12.4 14L10.6 14.2L2.6 7.6L2.6 6.6L7.2 4.4Z" fill="#939ba3"/><path d="M6.2 10.8L1.2 15.8" stroke="#939ba3" stroke-width="2.4" stroke-linecap="round"/></svg><svg class="a" style="left:887.9px;top:464.5px" width="17" height="17" viewBox="0 0 17 17"><path d="M10 0L16.8 6.6L13.6 9.2L12.4 14L10.6 14.2L2.6 7.6L2.6 6.6L7.2 4.4Z" fill="#939ba3"/><path d="M6.2 10.8L1.2 15.8" stroke="#939ba3" stroke-width="2.4" stroke-linecap="round"/></svg><svg class="a" style="left:1260px;top:464.2px" width="17" height="17" viewBox="0 0 17 17"><path d="M10 0L16.8 6.6L13.6 9.2L12.4 14L10.6 14.2L2.6 7.6L2.6 6.6L7.2 4.4Z" fill="#939ba3"/><path d="M6.2 10.8L1.2 15.8" stroke="#939ba3" stroke-width="2.4" stroke-linecap="round"/></svg><svg class="a" style="left:1632px;top:464.2px" width="17" height="17" viewBox="0 0 17 17"><path d="M10 0L16.8 6.6L13.6 9.2L12.4 14L10.6 14.2L2.6 7.6L2.6 6.6L7.2 4.4Z" fill="#939ba3"/><path d="M6.2 10.8L1.2 15.8" stroke="#939ba3" stroke-width="2.4" stroke-linecap="round"/></svg><div class="a" style="left:1878px;top:959px;width:19px;height:1.8px;background:#1a1a1a"></div><div class="a" style="left:1878px;top:964px;width:19px;height:1.8px;background:#1a1a1a"></div><div class="a" style="left:1878px;top:969px;width:19px;height:1.8px;background:#1a1a1a"></div><div class="a" style="left:1878px;top:974px;width:19px;height:1.8px;background:#1a1a1a"></div><div class="a" style="left:1913.3px;top:957.8px;width:19px;height:16px;border:1.7px solid #1a1a1a;border-radius:2px"></div><div class="a" style="left:1913.3px;top:975.8px;width:19px;height:1.7px;background:#1a1a1a"></div>
<div class="a" style="left:213.5px;top:959px;width:1px;height:17px;background:#ececec"></div>
<!-- taskbar -->
<div class="a" style="left:0;top:1189px;width:2048px;height:79px;background:linear-gradient(90deg,#e3ebf8,#dfe6f7 50%,#e4eaf6)"></div>
<svg class="a" style="left:759px;top:1211px;overflow:visible" width="38" height="37" viewBox="0 0 38 37"><defs><linearGradient id="st" x1="0" y1="0" x2="1" y2="1"><stop offset="0" stop-color="#4cc2f5"/><stop offset="1" stop-color="#0f6fd0"/></linearGradient></defs><path d="M0 2Q0 0 2 0H17.5V17.5H0ZM19.5 0H36Q38 0 38 2V17.5H19.5ZM0 19.5H17.5V37H2Q0 37 0 35ZM19.5 19.5H38V35Q38 37 36 37H19.5Z" fill="url(#st)"/></svg><svg class="a" style="left:833px;top:1211px;overflow:visible" width="35" height="36" viewBox="0 0 35 36"><circle cx="19.5" cy="14.5" r="12.8" stroke="#1e1e1e" stroke-width="3.4" fill="none"/><path d="M10.5 24L2.5 33" stroke="#1e1e1e" stroke-width="4" stroke-linecap="round"/></svg><svg class="a" style="left:903px;top:1210.5px;overflow:visible" width="38" height="37" viewBox="0 0 38 37"><defs><linearGradient id="tv" x1="0" y1="0" x2="1" y2="1"><stop offset="0" stop-color="#fdfdfd"/><stop offset="1" stop-color="#e4e6ea"/></linearGradient></defs><rect x="9" y="0" width="29" height="25.5" rx="1.5" fill="url(#tv)"/><rect x="0" y="10" width="29" height="26.5" rx="1.5" fill="#2e2e30"/><rect x="9" y="10" width="20" height="16" fill="#bdbdbd"/></svg><svg class="a" style="left:974.5px;top:1211px;overflow:visible" width="39" height="36" viewBox="0 0 39 36"><defs><linearGradient id="wg" x1="0" y1="0" x2="1" y2="0"><stop offset="0" stop-color="#ffffff"/><stop offset="1" stop-color="#c9c9c9"/></linearGradient></defs><rect x="0" y="0" width="39" height="36" rx="1.5" fill="#222"/><rect x="3.3" y="3" width="14.5" height="30" rx="1" fill="url(#wg)"/><rect x="20.5" y="3" width="15.5" height="13" fill="#45c8f2"/><rect x="20.5" y="19.5" width="15.5" height="5" fill="#2ba8e8"/><rect x="20.5" y="27" width="15.5" height="6" fill="#1a8ad8"/></svg><div class="a" style="left:1035px;top:1198.5px;width:61px;height:61.5px;border-radius:5px;background:#eef1f8;box-shadow:0 0 0 1px rgba(255,255,255,.6)"></div><svg class="a" style="left:1046px;top:1211px;overflow:visible" width="39" height="36" viewBox="0 0 39 36"><defs><linearGradient id="ex" x1="0" y1="0" x2="1" y2="1"><stop offset="0" stop-color="#ffe07a"/><stop offset="1" stop-color="#f6b81a"/></linearGradient></defs><path d="M0 2Q0 0 2 0H13L16 3.5H37Q39 3.5 39 5.5V34Q39 36 37 36H2Q0 36 0 34Z" fill="url(#ex)"/><path d="M0 2Q0 0 2 0H13L16 3.5L13 7H0Z" fill="#e5a316"/><rect x="7" y="23.5" width="25.5" height="12.5" rx="2.5" fill="#1f78d0"/><rect x="11" y="27" width="17.5" height="2" fill="#0e4f95"/></svg><div class="a" style="left:1053px;top:1255px;width:25.5px;height:4.3px;border-radius:2.2px;background:#1d7ad3"></div><svg class="a" style="left:1118px;top:1208.6px;overflow:visible" width="40" height="40" viewBox="0 0 40 40"><defs><linearGradient id="ed1" x1="0" y1="0" x2="1" y2="0.4"><stop offset="0" stop-color="#1fb2ec"/><stop offset="0.5" stop-color="#2ec6c4"/><stop offset="1" stop-color="#58e05a"/></linearGradient><linearGradient id="ed2" x1="0" y1="0" x2="0.3" y2="1"><stop offset="0" stop-color="#1d8fea"/><stop offset="1" stop-color="#0a52a8"/></linearGradient></defs><path d="M1.2 13C4 5 11 0.3 20 0.3C31 0.3 39.7 8.5 39.7 18C39.7 24.5 35 28.5 29.5 28.5C25.5 28.5 22.5 26.5 22.5 23.5C22.5 21.5 23.5 20.5 23.5 18.5C23.5 14 18 10.5 12 10.5C7 10.5 3 12 1.2 13Z" fill="url(#ed1)"/><path d="M1.2 13C3 12 7 10.5 12 10.5C18 10.5 23.5 14 23.5 18.5C19 18.8 15.5 21.5 15.5 25.5C15.5 30 20 33 25 33C29 33 33 32 36 29.5C33 35.5 27 39.3 19.8 39.3C9 39.3 0 30.5 0 19.8C0 17.3 0.4 15 1.2 13Z" fill="url(#ed2)"/></svg><svg class="a" style="left:1189.5px;top:1209px;overflow:visible" width="38.5" height="39.5" viewBox="0 0 38.5 39.5"><path d="M9.5 10V4Q9.5 1.5 12 1.5H26.5Q29 1.5 29 4V10" stroke="#1e1e1e" stroke-width="3" fill="none"/><rect x="0" y="9.5" width="38.5" height="30" rx="1" fill="#2a2b2e"/><rect x="12" y="19.5" width="6.5" height="6" fill="#f25022"/><rect x="20" y="19.5" width="6.5" height="6" fill="#7fba00"/><rect x="12" y="27" width="6.5" height="6" fill="#00a4ef"/><rect x="20" y="27" width="6.5" height="6" fill="#ffb900"/></svg><svg class="a" style="left:1856px;top:1223.5px;overflow:visible" width="18" height="10" viewBox="0 0 18 10"><path d="M0.8 9.2L9 1L17.2 9.2" stroke="#222" stroke-width="1.4" fill="none"/></svg><svg class="a" style="left:1891.5px;top:1218.5px;overflow:visible" width="26.5" height="18.5" viewBox="0 0 26.5 18.5"><path d="M2 0V4M6 0V4M0.5 4H7.5V8Q7.5 10.5 4 10.5Q0.5 10.5 0.5 8Z M4 10.5V18" stroke="#111" stroke-width="1.4" fill="none"/><rect x="8.5" y="4" width="15" height="12" stroke="#111" stroke-width="1.4" fill="none"/><rect x="10" y="5.5" width="5" height="9" fill="#111"/><rect x="23.5" y="7.5" width="2.5" height="5" fill="#111"/></svg><svg class="a" style="left:1930px;top:1215.5px;overflow:visible" width="27" height="27" viewBox="0 0 27 27"><circle cx="13" cy="13" r="12" stroke="#111" stroke-width="1.4" fill="none"/><ellipse cx="13" cy="13" rx="5.5" ry="12" stroke="#111" stroke-width="1.3" fill="none"/><path d="M1 13H25M3 7H23M3 19H23" stroke="#111" stroke-width="1.3"/><circle cx="20.5" cy="20.5" r="6" fill="#e3e9f3" stroke="#111" stroke-width="1.4"/><path d="M17 17L24 24" stroke="#111" stroke-width="1.3"/></svg><svg class="a" style="left:1970px;top:1218.5px;overflow:visible" width="25" height="20.5" viewBox="0 0 25 20.5"><path d="M0.7 6.5H5L11 1V19.5L5 14H0.7Z" stroke="#111" stroke-width="1.3" fill="none" stroke-linejoin="round"/><path d="M14 7Q16 10 14 13.5M17.5 4Q21 10 17.5 16.5M21 1.5Q26 10 21 19" stroke="#111" stroke-width="1.3" fill="none"/></svg>
<div class="t" style="left:281.0px;top:34.9px;font-size:18px;line-height:18px;color:#1c1c1c;transform:scaleX(1.0250)">File Explorer</div>
<div class="t" style="left:144.0px;top:78.0px;font-size:16.5px;line-height:16.5px;color:#ffffff;transform:scaleX(1.0240)">File</div>
<div class="t" style="left:224.3px;top:77.7px;font-size:16.5px;line-height:16.5px;color:#3a3a3a;transform:scaleX(1.0857)">Home</div>
<div class="t" style="left:314.5px;top:77.7px;font-size:16.5px;line-height:16.5px;color:#3a3a3a;transform:scaleX(1.0429)">Share</div>
<div class="t" style="left:403.8px;top:77.7px;font-size:16.5px;line-height:16.5px;color:#3a3a3a;transform:scaleX(1.0333)">View</div>
<div class="t" style="left:123.9px;top:177.7px;font-size:16px;line-height:16px;color:#7d8188;transform:scaleX(1.1106)">Pin to Quick</div>
<div class="t" style="left:146.4px;top:200.9px;font-size:16px;line-height:16px;color:#7d8188;transform:scaleX(1.0167)">access</div>
<div class="t" style="left:235.4px;top:177.7px;font-size:16px;line-height:16px;color:#7d8188;transform:scaleX(1.0861)">Copy</div>
<div class="t" style="left:302.0px;top:177.7px;font-size:16px;line-height:16px;color:#7d8188;transform:scaleX(1.0179)">Paste</div>
<div class="t" style="left:274.9px;top:232.0px;font-size:16px;line-height:16px;color:#5a5a5a;transform:scaleX(1.1493)">Clipboard</div>
<div class="t" style="left:391.9px;top:122.4px;font-size:16px;line-height:16px;color:#7d8188;transform:scaleX(1.0833)">Cut</div>
<div class="t" style="left:391.9px;top:158.0px;font-size:16px;line-height:16px;color:#7d8188;transform:scaleX(1.1127)">Copy path</div>
<div class="t" style="left:392.5px;top:192.7px;font-size:16px;line-height:16px;color:#7d8188;transform:scaleX(1.0772)">Paste shortcut</div>
<div class="t" style="left:534.9px;top:178.2px;font-size:16px;line-height:16px;color:#7d8188;transform:scaleX(1.1211)">Move</div>
<div class="t" style="left:543.0px;top:200.9px;font-size:16px;line-height:16px;color:#7d8188;transform:scaleX(1.0769)">to</div>
<div class="t" style="left:602.9px;top:178.2px;font-size:16px;line-height:16px;color:#7d8188;transform:scaleX(1.1028)">Copy</div>
<div class="t" style="left:610.0px;top:200.9px;font-size:16px;line-height:16px;color:#7d8188;transform:scaleX(1.0769)">to</div>
<div class="t" style="left:677.4px;top:178.2px;font-size:16px;line-height:16px;color:#2b2b2b;transform:scaleX(1.0933)">Delete</div>
<div class="t" style="left:739.6px;top:178.2px;font-size:16px;line-height:16px;color:#7d8188;transform:scaleX(1.0390)">Rename</div>
<div class="t" style="left:628.9px;top:231.9px;font-size:16px;line-height:16px;color:#5a5a5a;transform:scaleX(1.1175)">Organize</div>
<div class="t" style="left:836.9px;top:177.9px;font-size:16px;line-height:16px;color:#7d8188;transform:scaleX(1.1097)">New</div>
<div class="t" style="left:832.7px;top:201.0px;font-size:16px;line-height:16px;color:#7d8188;transform:scaleX(1.1250)">folder</div>
<div class="t" style="left:924.5px;top:122.4px;font-size:16px;line-height:16px;color:#7d8188;transform:scaleX(1.1292)">New item</div>
<div class="t" style="left:924.6px;top:158.4px;font-size:16px;line-height:16px;color:#2b2b2b;transform:scaleX(1.0080)">Easy access</div>
<div class="t" style="left:909.7px;top:231.7px;font-size:16px;line-height:16px;color:#5a5a5a;transform:scaleX(1.1032)">New</div>
<div class="t" style="left:1051.3px;top:178.0px;font-size:16px;line-height:16px;color:#7d8188;transform:scaleX(1.1014)">Properties</div>
<div class="t" style="left:1170.2px;top:122.9px;font-size:16px;line-height:16px;color:#7d8188;transform:scaleX(1.1351)">Open</div>
<div class="t" style="left:1171.0px;top:159.6px;font-size:16px;line-height:16px;color:#7d8188;transform:scaleX(1.0481)">Edit</div>
<div class="t" style="left:1170.9px;top:195.1px;font-size:16px;line-height:16px;color:#7d8188;transform:scaleX(1.0980)">History</div>
<div class="t" style="left:1119.9px;top:231.8px;font-size:16px;line-height:16px;color:#5a5a5a;transform:scaleX(1.1216)">Open</div>
<div class="t" style="left:1284.9px;top:122.4px;font-size:16px;line-height:16px;color:#2b2b2b;transform:scaleX(1.0794)">Select all</div>
<div class="t" style="left:1284.9px;top:157.8px;font-size:16px;line-height:16px;color:#2b2b2b;transform:scaleX(1.0843)">Select none</div>
<div class="t" style="left:1284.9px;top:192.7px;font-size:16px;line-height:16px;color:#2b2b2b;transform:scaleX(1.1170)">Invert selection</div>
<div class="t" style="left:1306.3px;top:231.7px;font-size:16px;line-height:16px;color:#5a5a5a;transform:scaleX(1.0721)">Select</div>
<div class="t" style="left:388.8px;top:285.7px;font-size:19px;line-height:19px;color:#1a1a1a;transform:scaleX(0.9866)">Quick access</div>
<div class="t" style="left:1442.4px;top:286.4px;font-size:19px;line-height:19px;color:#6e6e6e;transform:scaleX(0.9763)">Search Quick access</div>
<div class="t" style="left:181.7px;top:369.0px;font-size:19.5px;line-height:19.5px;color:#1a1a1a;transform:scaleX(0.9640)">Quick access</div>
<div class="t" style="left:194.4px;top:414.1px;font-size:19.5px;line-height:19.5px;color:#1a1a1a;transform:scaleX(1.0058)">Desktop</div>
<div class="t" style="left:194.4px;top:458.6px;font-size:19.5px;line-height:19.5px;color:#1a1a1a;transform:scaleX(1.0021)">Downloads</div>
<div class="t" style="left:193.9px;top:503.4px;font-size:19.5px;line-height:19.5px;color:#1a1a1a;transform:scaleX(1.0146)">Documents</div>
<div class="t" style="left:194.1px;top:547.6px;font-size:19.5px;line-height:19.5px;color:#1a1a1a;transform:scaleX(0.9676)">Pictures</div>
<div class="t" style="left:193.9px;top:592.4px;font-size:19.5px;line-height:19.5px;color:#1a1a1a;transform:scaleX(1.0271)">Music</div>
<div class="t" style="left:196.0px;top:636.7px;font-size:19.5px;line-height:19.5px;color:#1a1a1a;transform:scaleX(0.9492)">Videos</div>
<div class="t" style="left:181.3px;top:693.8px;font-size:19.5px;line-height:19.5px;color:#1a1a1a;transform:scaleX(0.9840)">OneDrive</div>
<div class="t" style="left:183.1px;top:749.3px;font-size:19.5px;line-height:19.5px;color:#1a1a1a;transform:scaleX(0.8928)">This PC</div>
<div class="t" style="left:181.0px;top:861.1px;font-size:19.5px;line-height:19.5px;color:#1a1a1a;transform:scaleX(1.0304)">Network</div>
<div class="t" style="left:402.6px;top:354.8px;font-size:19.5px;line-height:19.5px;color:#263a7c;transform:scaleX(0.9929)">Frequent folders (6)</div>
<div class="t" style="left:514.8px;top:407.7px;font-size:19px;line-height:19px;color:#1a1a1a;transform:scaleX(1.0176)">Desktop</div>
<div class="t" style="left:515.8px;top:437.5px;font-size:19px;line-height:19px;color:#757575;transform:scaleX(0.9134)">This PC</div>
<div class="t" style="left:886.9px;top:407.6px;font-size:19px;line-height:19px;color:#1a1a1a;transform:scaleX(1.0097)">Downloads</div>
<div class="t" style="left:887.9px;top:437.5px;font-size:19px;line-height:19px;color:#757575;transform:scaleX(0.9194)">This PC</div>
<div class="t" style="left:1258.5px;top:407.6px;font-size:19px;line-height:19px;color:#1a1a1a;transform:scaleX(1.0211)">Documents</div>
<div class="t" style="left:1259.5px;top:437.5px;font-size:19px;line-height:19px;color:#757575;transform:scaleX(0.9254)">This PC</div>
<div class="t" style="left:1630.5px;top:407.6px;font-size:19px;line-height:19px;color:#1a1a1a;transform:scaleX(0.9851)">Pictures</div>
<div class="t" style="left:1631.5px;top:437.5px;font-size:19px;line-height:19px;color:#757575;transform:scaleX(0.9254)">This PC</div>
<div class="t" style="left:514.7px;top:519.2px;font-size:19px;line-height:19px;color:#1a1a1a;transform:scaleX(1.0437)">Music</div>
<div class="t" style="left:515.8px;top:548.5px;font-size:19px;line-height:19px;color:#757575;transform:scaleX(0.9134)">This PC</div>
<div class="t" style="left:887.3px;top:519.2px;font-size:19px;line-height:19px;color:#1a1a1a;transform:scaleX(0.9947)">Videos</div>
<div class="t" style="left:887.9px;top:548.5px;font-size:19px;line-height:19px;color:#757575;transform:scaleX(0.9194)">This PC</div>
<div class="t" style="left:402.9px;top:643.3px;font-size:19.5px;line-height:19.5px;color:#263a7c;transform:scaleX(0.9727)">Recent files (0)</div>
<div class="t" style="left:859.4px;top:707.6px;font-size:19px;line-height:19px;color:#737373;transform:scaleX(1.0264)">After you’ve opened some files, we’ll show the most recent ones here.</div>
<div class="t" style="left:134.4px;top:959.6px;font-size:19px;line-height:19px;color:#333333;transform:scaleX(1.0183)">6 items</div>
<div class="t" style="left:181.3px;top:804.8px;font-size:19.5px;line-height:19.5px;color:#1a1a1a;transform:scaleX(0.9771)">CD Drive (D:) VirtualB</div>
<div class="t" style="left:2019.4px;top:1204.3px;font-size:17px;line-height:17px;color:#111111;transform:scaleX(1.0000)">8:16 PM</div>
<div class="t" style="left:2012.0px;top:1239.5px;font-size:17px;line-height:17px;color:#111111;transform:scaleX(1.0000)">6/16/2021</div>
</body></html>
